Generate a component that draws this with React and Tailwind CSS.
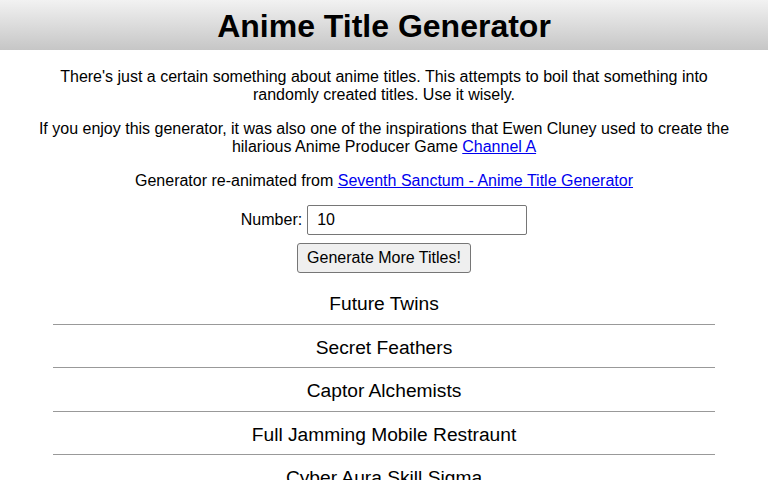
import { useState } from 'react';

const titles = [
  'Future Twins',
  'Secret Feathers',
  'Captor Alchemists',
  'Full Jamming Mobile Restraunt',
  'Cyber Aura Skill Sigma',
  'Magical Dragon Hunters',
  'Lost Academy Zero',
  'Steel Blossom Requiem',
  'Crimson Idol Project',
  'Galaxy Ninja Express',
];

function App() {
  const [count, setCount] = useState('10');

  return (
    <div className="min-h-screen bg-white text-black text-[16px] leading-[18px]" style={{ fontFamily: '"Liberation Sans", Arial, sans-serif' }}>
      {/* Header */}
      <header className="h-[50px] flex items-center justify-center bg-gradient-to-b from-[#f2f2f2] to-[#c6c6c6]">
        <h1 className="text-[32px] leading-[37px] font-bold pt-[2px]">Anime Title Generator</h1>
      </header>

      <main className="px-8 text-center">
        <p className="mt-[18px]">
          There's just a certain something about anime titles. This attempts to boil that something into randomly created titles. Use it wisely.
        </p>
        <p className="mt-4">
          If you enjoy this generator, it was also one of the inspirations that Ewen Cluney used to create the hilarious Anime Producer Game{' '}
          <a href="#" className="text-[#0000ee] underline">Channel A</a>
        </p>
        <p className="mt-4">
          Generator re-animated from{' '}
          <a href="#" className="text-[#0000ee] underline">Seventh Sanctum - Anime Title Generator</a>
        </p>

        {/* Form */}
        <div className="mt-[15px] flex items-center justify-center gap-[5px]">
          <label htmlFor="num">Number:</label>
          <input
            id="num"
            value={count}
            onChange={(e) => setCount(e.target.value)}
            className="w-[220px] h-[30px] px-[9px] border border-[#767676] rounded-[2px] outline-none"
          />
        </div>
        <div className="mt-2 flex justify-center">
          <button className="h-[30px] px-[9px] bg-[#efefef] border border-[#767676] rounded-[3px]">
            Generate More Titles!
          </button>
        </div>

        {/* Titles */}
        <ul className="mt-2 w-[662px] mx-auto">
          {titles.map((t) => (
            <li key={t} className="pt-[12px] pb-[8px] text-[19.2px] leading-[22.5px] border-b border-[#999]">
              {t}
            </li>
          ))}
        </ul>
      </main>
    </div>
  );
}

export default App;
